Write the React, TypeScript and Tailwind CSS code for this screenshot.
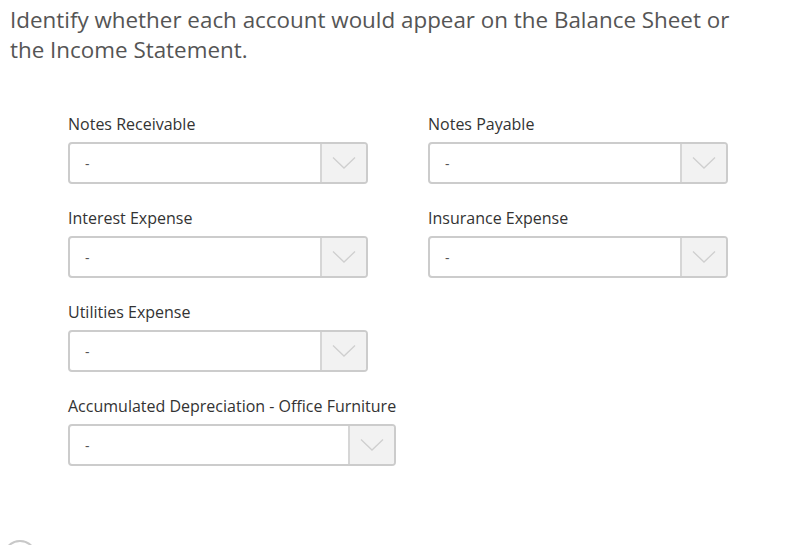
import React from 'react';

const fields = [
  'Notes Receivable',
  'Notes Payable',
  'Interest Expense',
  'Insurance Expense',
  'Utilities Expense',
];

const Chevron = () => (
  <svg width="24" height="14" viewBox="0 0 24 14" fill="none">
    <path d="M1 1.5 L12 12 L23 1.5" stroke="#cfcfcf" strokeWidth="1.3" />
  </svg>
);

const SelectBox = ({ wide }: { wide?: boolean }) => (
  <div className={`flex h-[42px] rounded-[4px] border-2 border-[#cccccc] bg-white ${wide ? 'w-full' : 'w-[300px]'}`}>
    <div className="flex flex-1 items-center pl-[15px] text-[14px] text-[#555]">-</div>
    <div className="flex w-[46px] items-center justify-center border-l-2 border-[#d6d6d6] bg-[#f2f2f2] rounded-r-[2px]">
      <Chevron />
    </div>
  </div>
);

const Field = ({ label, wide }: { label: string; wide?: boolean }) => (
  <div className={`flex flex-col ${wide ? 'col-span-2 w-max min-w-[300px]' : ''}`}>
    <label className="mb-[7px] text-[16px] leading-[21px] text-[#333]">{label}</label>
    <SelectBox wide={wide} />
  </div>
);

export default function App() {
  return (
    <div className="h-[545px] overflow-hidden bg-white font-['Open_Sans',sans-serif]">
      <h1 className="max-w-[750px] pl-[10px] pt-[5px] text-[22.4px] leading-[30px] text-[#555]">
        Identify whether each account would appear on the Balance Sheet or the Income Statement.
      </h1>
      <div className="mt-[49px] ml-[68px] grid grid-cols-[300px_300px] gap-x-[60px] gap-y-[24px]">
        {fields.map((f) => (
          <Field key={f} label={f} />
        ))}
        <Field label="Accumulated Depreciation - Office Furniture" wide />
      </div>
      <div className="mt-[74px] ml-[3px] h-[34px] w-[34px] rounded-full border-2 border-[#c8c8c8]" />
    </div>
  );
}
